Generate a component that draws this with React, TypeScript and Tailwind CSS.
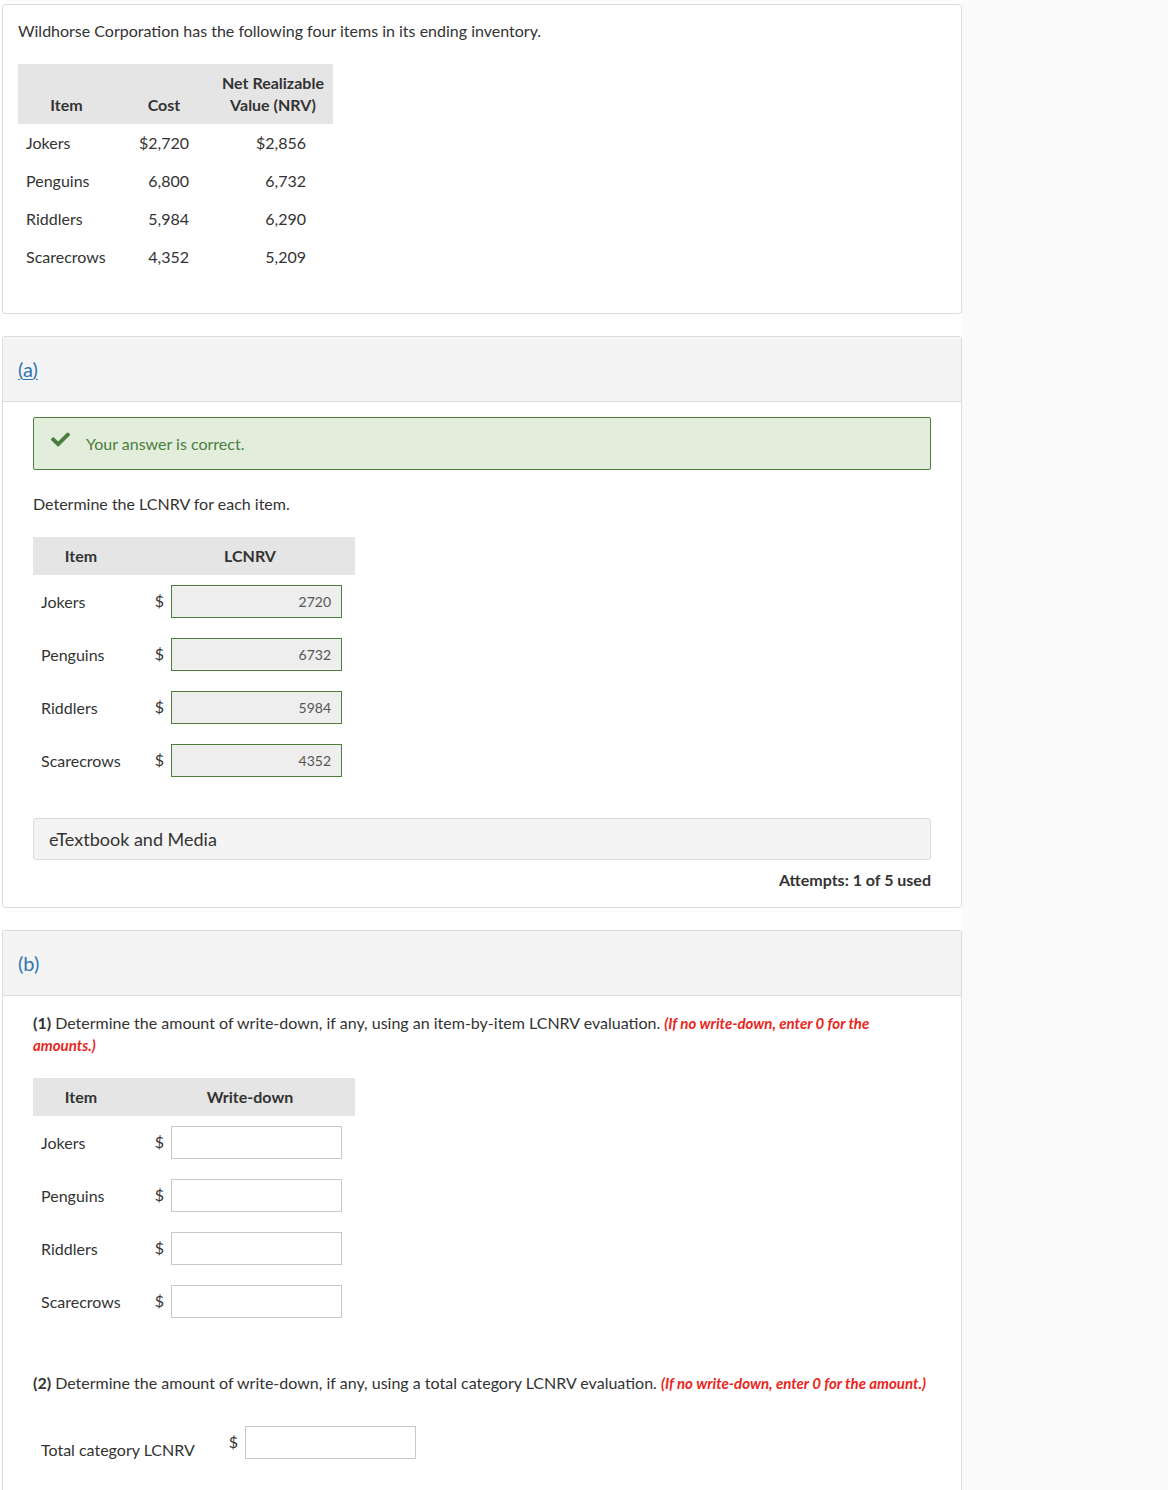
import React from "react";

const font = { fontFamily: "Lato, 'Open Sans', sans-serif" };

function Check() {
  return (
    <svg width="19" height="19" viewBox="0 0 512 512" className="block -translate-y-[4px]">
      <path
        fill="#4b7d3e"
        d="M173.898 439.404l-166.4-166.4c-9.997-9.997-9.997-26.206 0-36.204l36.203-36.204c9.997-9.998 26.207-9.998 36.204 0L192 312.69 432.095 72.596c9.997-9.997 26.207-9.997 36.204 0l36.203 36.204c9.997 9.997 9.997 26.206 0 36.204l-294.4 294.401c-9.998 9.997-26.207 9.997-36.204-.001z"
      />
    </svg>
  );
}

const items1 = [
  ["Jokers", "$2,720", "$2,856"],
  ["Penguins", "6,800", "6,732"],
  ["Riddlers", "5,984", "6,290"],
  ["Scarecrows", "4,352", "5,209"],
];

const names = ["Jokers", "Penguins", "Riddlers", "Scarecrows"];
const lcnrv = ["2720", "6732", "5984", "4352"];

function InputRow({ name, value, correct }: { name: string; value?: string; correct?: boolean }) {
  return (
    <div className="flex h-[53px] items-center">
      <div className="w-[96px] pl-2 pt-[1px] text-[16px] text-[#333]">{name}</div>
      <div className="flex h-[33px] w-[42px] items-start justify-end pr-[7px] pt-[4px] text-[16px] text-[#333]">$</div>
      <div
        className={
          correct
            ? "flex h-[33px] w-[171px] items-center justify-end border border-[#4d7e3e] bg-[#eeeeee] pr-[10px] text-[14px] text-[#555]"
            : "flex h-[33px] w-[171px] items-center justify-end border border-[#c8c8c8] bg-white pr-[10px] text-[14px] text-[#555]"
        }
      >
        {value}
      </div>
    </div>
  );
}

export default function App() {
  return (
    <div className="flex min-h-[1490px] w-[1168px] bg-[#fafafa]" style={font}>
      <div className="w-[962px] bg-white pl-[2px] pt-[4px]">
        {/* Card 1 */}
        <div className="h-[310px] rounded-[3px] border border-[#dcdcdc] px-[15px] pt-[15px]">
          <p className="text-[16px] leading-[22px] text-[#333]">
            Wildhorse Corporation has the following four items in its ending inventory.
          </p>
          <div className="mt-[22px] w-[315px]">
            <div className="flex h-[60px] items-end bg-[#e5e5e5] pb-[8px] text-[16px] font-bold leading-[22px] text-[#333]">
              <div className="w-[97px] text-center">Item</div>
              <div className="w-[98px] text-center">Cost</div>
              <div className="w-[120px] text-center">
                Net Realizable
                <br />
                Value (NRV)
              </div>
            </div>
            {items1.map((r) => (
              <div key={r[0]} className="flex h-[38px] items-center text-[16px] text-[#333]">
                <div className="w-[97px] pl-2">{r[0]}</div>
                <div className="w-[98px] pr-[24px] text-right">{r[1]}</div>
                <div className="w-[120px] pr-[27px] text-right">{r[2]}</div>
              </div>
            ))}
          </div>
        </div>

        {/* Card 2 */}
        <div className="mt-[22px] h-[572px] rounded-[3px] border border-[#dcdcdc]">
          <div className="flex h-[65px] items-center border-b border-[#dcdcdc] bg-[#f4f4f4] px-[15px]">
            <span className="text-[20px] text-[#2f74b5] underline decoration-1 underline-offset-2">(a)</span>
          </div>
          <div className="px-[30px] pt-[15px]">
            <div className="flex h-[53px] w-[898px] items-center rounded-[2px] border border-[#4d7e3e] bg-[#e2eedb] pl-[17px]">
              <Check />
              <span className="ml-[16px] pt-[1px] text-[16px] text-[#4b7d3e]">Your answer is correct.</span>
            </div>
            <p className="mt-[23px] text-[16px] leading-[22px] text-[#333]">Determine the LCNRV for each item.</p>
            <div className="mt-[22px] w-[322px]">
              <div className="flex h-[38px] items-center bg-[#e5e5e5] text-[16px] font-bold text-[#333]">
                <div className="w-[96px] text-center">Item</div>
                <div className="flex-1 pl-[16px] text-center">LCNRV</div>
              </div>
              {names.map((n, i) => (
                <InputRow key={n} name={n} value={lcnrv[i]} correct />
              ))}
            </div>
            <div className="mt-[31px] flex h-[42px] w-[898px] items-center rounded-[3px] border border-[#dcdcdc] bg-[#f4f4f4] pl-[15px] text-[18px] text-[#333]">
              eTextbook and Media
            </div>
            <div className="mt-[8px] w-[898px] text-right text-[16px] font-bold text-[#333]">Attempts: 1 of 5 used</div>
          </div>
        </div>

        {/* Card 3 */}
        <div className="mt-[22px] h-[580px] rounded-t-[3px] border border-b-0 border-[#dcdcdc]">
          <div className="flex h-[65px] items-center border-b border-[#dcdcdc] bg-[#f4f4f4] px-[15px]">
            <span className="text-[20px] text-[#2f74b5]">(b)</span>
          </div>
          <div className="px-[30px] pt-[16px]">
            <div className="w-[898px] text-[16px] leading-[22px] text-[#333]">
              <div className="whitespace-nowrap">
                <b>(1)</b> Determine the amount of write-down, if any, using an item-by-item LCNRV evaluation.{" "}
                <b className="text-[15px] italic text-[#e8261c]">(If no write-down, enter 0 for the</b>
              </div>
              <div>
                <b className="text-[15px] italic text-[#e8261c]">amounts.)</b>
              </div>
            </div>
            <div className="mt-[22px] w-[322px]">
              <div className="flex h-[38px] items-center bg-[#e5e5e5] text-[16px] font-bold text-[#333]">
                <div className="w-[96px] text-center">Item</div>
                <div className="flex-1 pl-[16px] text-center">Write-down</div>
              </div>
              {names.map((n) => (
                <InputRow key={n} name={n} />
              ))}
            </div>
            <p className="mt-[44px] whitespace-nowrap text-[16px] leading-[22px] text-[#333]">
              <b>(2)</b> Determine the amount of write-down, if any, using a total category LCNRV evaluation.{" "}
              <b className="text-[15px] italic text-[#e8261c]">(If no write-down, enter 0 for the amount.)</b>
            </p>
            <div className="mt-[32px] flex h-[33px] items-end">
              <div className="w-[193px] pl-2 text-[16px] leading-[18px] text-[#333]">Total category LCNRV</div>
              <div className="flex h-[33px] w-[19px] items-start justify-end pr-[7px] pt-[4px] text-[16px] text-[#333]">$</div>
              <div className="h-[33px] w-[171px] border border-[#c8c8c8] bg-white"></div>
            </div>
          </div>
        </div>
      </div>
    </div>
  );
}
